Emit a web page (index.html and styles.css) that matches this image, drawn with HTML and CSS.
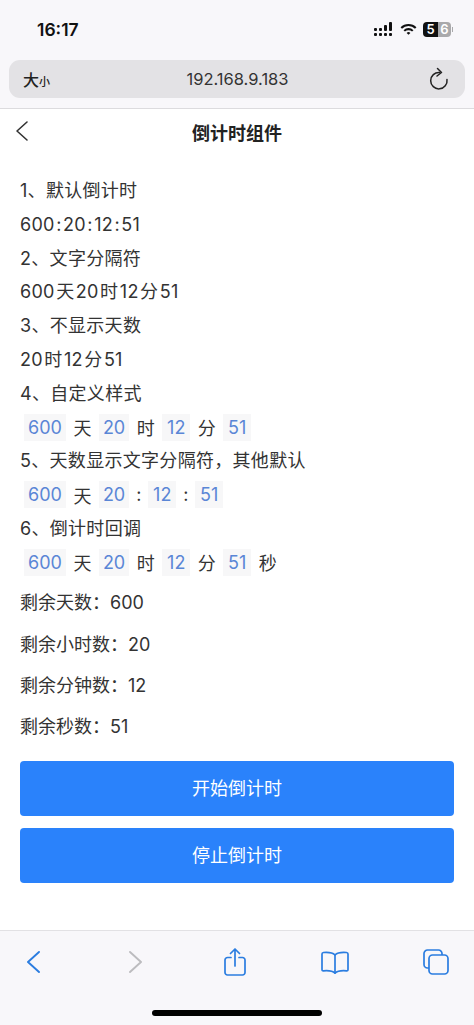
FILE: index.html
```html
<!DOCTYPE html>
<html lang="zh-CN">
<head>
    <meta charset="UTF-8">
    <meta name="viewport" content="width=device-width, initial-scale=1.0">
    <title>倒计时组件</title>
    <link rel="stylesheet" href="styles.css">
</head>
<body>
    <div class="browser-top">
        <div class="status-bar">
            <span class="clock">16:17</span>
            <div class="status-icons">
                <svg width="19" height="14" viewBox="0 0 19 14" fill="#111">
                    <rect x="0" y="6" width="3" height="3" rx="1"/><rect x="0" y="11" width="3" height="3" rx="1"/>
                    <rect x="5" y="6" width="3" height="3" rx="1"/><rect x="5" y="11" width="3" height="3" rx="1"/>
                    <rect x="10" y="3" width="3" height="6" rx="1"/><rect x="10" y="11" width="3" height="3" rx="1"/>
                    <rect x="15" y="0" width="3" height="9" rx="1"/><rect x="15" y="11" width="3" height="3" rx="1"/>
                </svg>
                <svg width="17" height="13" viewBox="0 0 20 14" fill="none" stroke="#111" stroke-width="2.4">
                    <path d="M1.500 5.200a12 12 0 0 1 17 0"/>
                    <path d="M5 8.600a7.200 7.200 0 0 1 10 0"/>
                    <path d="M10 13.200 7.800 11a3 3 0 0 1 4.400 0z" fill="#111" stroke="none"/>
                </svg>
                <div class="battery"><span class="battery-level">5</span><span class="battery-rest">6</span></div>
                <span class="battery-cap"></span>
            </div>
        </div>
        <div class="address-bar">
            <span class="text-size">大<small>小</small></span>
            <span class="address">192.168.9.183</span>
            <svg width="20" height="24" viewBox="0 0 20 24" fill="none" stroke="#222" stroke-width="1.500" stroke-linecap="round" stroke-linejoin="round">
                <path d="M10.500 5.500A8.200 8.200 0 1 0 18 12.500"/>
                <path d="M8.500 1.500 12.500 5.500 8 9"/>
            </svg>
        </div>
    </div>

    <div class="nav-bar">
        <svg class="nav-back" width="14" height="22" viewBox="0 0 14 22" fill="none" stroke="#333" stroke-width="1.600" stroke-linecap="round" stroke-linejoin="round">
            <path d="M12 2 2 11l10 9"/>
        </svg>
        <h1>倒计时组件</h1>
    </div>

    <div class="content">
        <p class="line">1、默认倒计时</p>
        <p class="line tight">600 : 20 : 12 : 51</p>
        <p class="line">2、文字分隔符</p>
        <p class="line tight">600 天 20 时 12 分 51</p>
        <p class="line">3、不显示天数</p>
        <p class="line tight">20 时 12 分 51</p>
        <p class="line">4、自定义样式</p>
        <div class="countdown">
            <span class="num">600</span><span class="sep">天</span>
            <span class="num">20</span><span class="sep">时</span>
            <span class="num">12</span><span class="sep">分</span>
            <span class="num">51</span>
        </div>
        <p class="line">5、天数显示文字分隔符，其他默认</p>
        <div class="countdown">
            <span class="num">600</span><span class="sep">天</span>
            <span class="num">20</span><span class="sep colon">:</span>
            <span class="num">12</span><span class="sep colon">:</span>
            <span class="num">51</span>
        </div>
        <p class="line">6、倒计时回调</p>
        <div class="countdown">
            <span class="num">600</span><span class="sep">天</span>
            <span class="num">20</span><span class="sep">时</span>
            <span class="num">12</span><span class="sep">分</span>
            <span class="num">51</span><span class="sep">秒</span>
        </div>
        <p class="remain first">剩余天数：600</p>
        <p class="remain">剩余小时数：20</p>
        <p class="remain">剩余分钟数：12</p>
        <p class="remain">剩余秒数：51</p>
        <button class="btn first-btn">开始倒计时</button>
        <button class="btn">停止倒计时</button>
    </div>

    <div class="toolbar">
        <div class="tools">
            <svg class="tool-back" width="14" height="24" viewBox="0 0 14 24" fill="none" stroke="#2b7de0" stroke-width="1.900" stroke-linecap="round" stroke-linejoin="round">
                <path d="M13 2 2 12l11 10"/>
            </svg>
            <svg class="tool-forward" width="14" height="24" viewBox="0 0 14 24" fill="none" stroke="#bcbcbf" stroke-width="1.900" stroke-linecap="round" stroke-linejoin="round">
                <path d="M1 2l11 10L1 22"/>
            </svg>
            <svg class="tool-share" width="22" height="28" viewBox="0 0 22 28" fill="none" stroke="#2b7de0" stroke-width="1.700" stroke-linecap="round" stroke-linejoin="round">
                <path d="M7 9.500H3.500A2.500 2.500 0 0 0 1 12v12.500A2.500 2.500 0 0 0 3.500 27h15a2.500 2.500 0 0 0 2.500-2.500V12a2.500 2.500 0 0 0-2.500-2.500H15"/>
                <path d="M11 18V1.500M6.500 5.500 11 1l4.500 4.500"/>
            </svg>
            <svg class="tool-book" width="28" height="23" viewBox="0 0 28 23" fill="none" stroke="#2b7de0" stroke-width="1.700" stroke-linecap="round" stroke-linejoin="round">
                <path d="M14 4C12 2 8.500 1 2.500 1.500 1.500 1.600 1 2.100 1 3v15.500c0 1 .5 1.400 1.500 1.300 5-.4 9 0 11.500 2.200 2.500-2.200 6.500-2.600 11.500-2.200 1 .1 1.500-.3 1.500-1.300V3c0-.9-.5-1.400-1.500-1.500C19.500 1 16 2 14 4z"/>
                <path d="M14 4v18"/>
            </svg>
            <svg class="tool-tabs" width="26" height="26" viewBox="0 0 26 26" fill="none" stroke="#2b7de0" stroke-width="1.700" stroke-linejoin="round">
                <path d="M6 19H4.500A3.500 3.500 0 0 1 1 15.500v-11A3.500 3.500 0 0 1 4.500 1h11A3.500 3.500 0 0 1 19 4.500V6"/>
                <rect x="6" y="6" width="19" height="19" rx="3.500"/>
            </svg>
        </div>
        <div class="home-indicator"></div>
    </div>
</body>
</html>
```

FILE: styles.css
```css
* {
    margin: 0;
    padding: 0;
    box-sizing: border-box;
    font-family: Inter, "Noto Sans CJK SC", sans-serif;
}

body {
    background-color: white;
    height: 1025px;
    display: flex;
    flex-direction: column;
    overflow: hidden;
    color: #333;
}

.browser-top {
    background-color: #f8f7fa;
    height: 109px;
    padding-top: 11px;
    border-bottom: 1px solid #dcdbde;
}

.status-bar {
    display: flex;
    justify-content: space-between;
    align-items: center;
    height: 36px;
    padding: 0 21px 0 37px;
}

.clock {
    font-size: 17.500px;
    font-weight: 600;
    color: #111;
}

.status-icons {
    display: flex;
    align-items: center;
    gap: 7px;
}

.battery {
    display: flex;
    width: 28px;
    height: 15px;
    margin-left: -1px;
    border-radius: 4px;
    overflow: hidden;
    font-size: 13px;
    font-weight: 600;
    line-height: 15px;
    color: white;
    text-align: center;
}

.battery-level {
    width: 15px;
    background-color: #111;
}

.battery-rest {
    width: 13px;
    background-color: #a9a9ab;
}

.battery-cap {
    width: 1px;
    height: 5px;
    margin-left: -6px;
    background-color: #a9a9ab;
}

.address-bar {
    display: flex;
    align-items: center;
    justify-content: space-between;
    height: 38px;
    margin: 13px 9px 0;
    padding: 0 16px 0 14px;
    background-color: #e3e2e5;
    border-radius: 11px;
}

.text-size {
    font-size: 16px;
    font-weight: 500;
    color: #222;
}

.text-size small {
    font-size: 11px;
}

.address {
    margin-left: -4px;
    font-size: 16.500px;
    color: #333;
}

.nav-bar {
    display: flex;
    align-items: center;
    justify-content: center;
    height: 50px;
    padding-bottom: 5px;
    position: relative;
}

.nav-back {
    position: absolute;
    left: 15px;
    top: 11px;
}

h1 {
    font-size: 18px;
    font-weight: bold;
    color: #222;
}

.content {
    flex: 1;
    padding: 15px 20px 0;
}

.line {
    font-size: 18px;
    letter-spacing: 0.300px;
    line-height: 33.750px;
    color: #333;
}

.tight {
    word-spacing: -4px;
}

.countdown {
    display: flex;
    align-items: center;
    height: 33.750px;
    padding-left: 4px;
    font-size: 18px;
}

.num {
    min-width: 28px;
    height: 27px;
    line-height: 27px;
    padding: 0 4px;
    text-align: center;
    background-color: #f7f7f8;
    color: #5a86d6;
}

.sep {
    width: 33px;
    text-align: center;
    color: #333;
}

.colon {
    width: 19px;
}

.remain {
    font-size: 18px;
    line-height: 41.300px;
    color: #333;
}

.remain.first {
    margin-top: 3.400px;
}

.btn {
    display: block;
    width: 100%;
    height: 55px;
    margin-top: 12px;
    padding-bottom: 3px;
    background-color: #2a82fb;
    color: white;
    border: none;
    border-radius: 4px;
    font-size: 18px;
}

.first-btn {
    margin-top: 13.500px;
}

.toolbar {
    height: 95px;
    background-color: #f8f7fa;
    border-top: 1px solid #e2e1e4;
    position: relative;
}

.tools {
    display: flex;
    align-items: center;
    height: 62px;
    padding-left: 26px;
}

.tool-forward {
    margin-left: 89px;
}

.tool-share {
    margin-left: 81px;
}

.tool-book {
    margin-left: 75px;
}

.tool-tabs {
    margin-left: 74px;
}

.home-indicator {
    position: absolute;
    left: 152px;
    bottom: 9px;
    width: 170px;
    height: 6px;
    border-radius: 3px;
    background-color: black;
}
```
